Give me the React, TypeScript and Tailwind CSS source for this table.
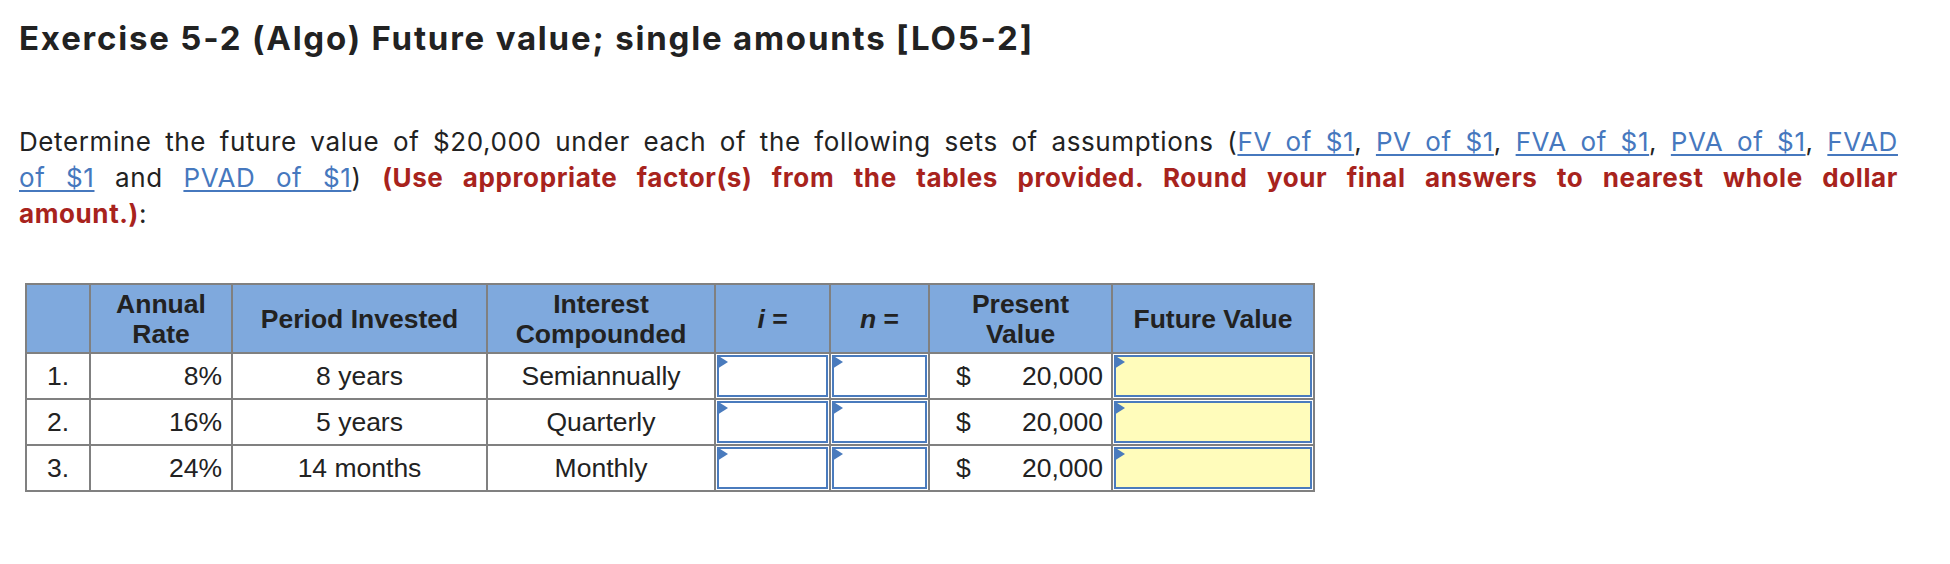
import clsx from "clsx";

const rows = [
  { no: "1.", rate: "8%", period: "8 years", compounded: "Semiannually", pv: "20,000" },
  { no: "2.", rate: "16%", period: "5 years", compounded: "Quarterly", pv: "20,000" },
  { no: "3.", rate: "24%", period: "14 months", compounded: "Monthly", pv: "20,000" },
];

const cell = "border-2 border-[#808080]";

function Entry({ yellow = false }: { yellow?: boolean }) {
  return (
    <div
      className={clsx(
        "relative h-[42px] border-2 border-[#4a7bbd]",
        yellow ? "bg-[#fffcbb]" : "bg-white"
      )}
    >
      <span className="absolute -left-[2px] -top-[2px] h-0 w-0 border-y-[7px] border-l-[11px] border-y-transparent border-l-[#4a7bbd]" />
    </div>
  );
}

function TableLink({ children }: { children: React.ReactNode }) {
  return (
    <a href="#" className="text-[#4678be] underline decoration-[1.5px] underline-offset-[3px]">
      {children}
    </a>
  );
}

export default function App() {
  return (
    <div className="min-h-[564px] bg-white pl-[19px] text-[#222]">
      <h1 className="pt-[19px] font-['Inter',sans-serif] text-[33px] font-bold leading-[39px] tracking-[1.8px]">
        Exercise 5-2 (Algo) Future value; single amounts [LO5-2]
      </h1>

      <div className="mt-[66px] w-[1879px] font-['Inter',sans-serif] text-[26px] leading-[36px] tracking-[0.6px]">
        <div className="text-justify [text-align-last:justify]">
          Determine the future value of $20,000 under each of the following sets of assumptions (
          <TableLink>FV of $1</TableLink>, <TableLink>PV of $1</TableLink>,{" "}
          <TableLink>FVA of $1</TableLink>, <TableLink>PVA of $1</TableLink>,{" "}
          <TableLink>FVAD</TableLink>
        </div>
        <div className="text-justify [text-align-last:justify]">
          <TableLink>of $1</TableLink> and <TableLink>PVAD of $1</TableLink>){" "}
          <strong className="font-bold text-[#a8231d]">
            (Use appropriate factor(s) from the tables provided. Round your final answers to nearest
            whole dollar
          </strong>
        </div>
        <div>
          <strong className="font-bold text-[#a8231d]">amount.)</strong>:
        </div>
      </div>

      <table className="mt-[51px] ml-[6px] w-[1288px] table-fixed border-collapse font-['Liberation_Sans',Arial,sans-serif] text-[26.5px] leading-[30px]">
        <colgroup>
          <col className="w-[64px]" />
          <col className="w-[142px]" />
          <col className="w-[255px]" />
          <col className="w-[228px]" />
          <col className="w-[115px]" />
          <col className="w-[99px]" />
          <col className="w-[183px]" />
          <col className="w-[202px]" />
        </colgroup>
        <thead>
          <tr className="bg-[#7fa9dd] font-bold">
            <th className={clsx(cell, "h-[69px]")} />
            <th className={cell}>
              Annual
              <br />
              Rate
            </th>
            <th className={cell}>Period Invested</th>
            <th className={cell}>
              Interest
              <br />
              Compounded
            </th>
            <th className={cell}>
              <i>i</i> =
            </th>
            <th className={cell}>
              <i>n</i> =
            </th>
            <th className={cell}>
              Present
              <br />
              Value
            </th>
            <th className={cell}>Future Value</th>
          </tr>
        </thead>
        <tbody>
          {rows.map((row) => (
            <tr key={row.no}>
              <td className={clsx(cell, "h-[46px] text-center")}>{row.no}</td>
              <td className={clsx(cell, "pr-[9px] text-right")}>{row.rate}</td>
              <td className={clsx(cell, "text-center")}>{row.period}</td>
              <td className={clsx(cell, "text-center")}>{row.compounded}</td>
              <td className={clsx(cell, "p-[1px]")}>
                <Entry />
              </td>
              <td className={clsx(cell, "p-[1px]")}>
                <Entry />
              </td>
              <td className={cell}>
                <div className="flex justify-between pl-[26px] pr-[8px]">
                  <span>$</span>
                  <span>{row.pv}</span>
                </div>
              </td>
              <td className={clsx(cell, "p-[1px]")}>
                <Entry yellow />
              </td>
            </tr>
          ))}
        </tbody>
      </table>
    </div>
  );
}
